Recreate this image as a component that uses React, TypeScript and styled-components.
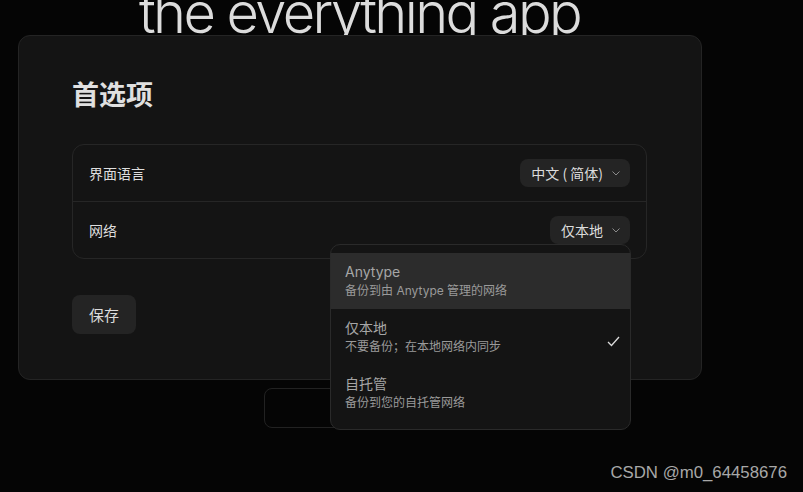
import React from "react";
import styled, { createGlobalStyle } from "styled-components";

const GlobalStyle = createGlobalStyle`
  html, body {
    margin: 0;
    padding: 0;
    background: #050505;
    overflow: hidden;
  }
  body {
    width: 803px;
    height: 492px;
    font-family: Inter, "Noto Sans CJK SC", sans-serif;
  }
`;

const Page = styled.div`
  position: relative;
  width: 803px;
  height: 492px;
  overflow: hidden;
  display: flex;
  flex-direction: column;
`;

const Hero = styled.h1`
  margin: -22px 0 0 0;
  padding-left: 139px;
  height: 57px;
  font-family: Inter, sans-serif;
  font-weight: 300;
  font-size: 56px;
  line-height: 70px;
  letter-spacing: -2.6px;
  color: #dcdcdc;
  white-space: nowrap;
`;

const Card = styled.div`
  position: relative;
  z-index: 1;
  margin-left: 18px;
  width: 684px;
  box-sizing: border-box;
  padding: 40px 54px 45px 53px;
  background: #141414;
  border: 1px solid #242424;
  border-radius: 12px;
  display: flex;
  flex-direction: column;
  align-items: flex-start;
`;

const Title = styled.h2`
  margin: 0 0 32px 0;
  font-family: "Noto Sans CJK SC", sans-serif;
  font-size: 27px;
  line-height: 36px;
  font-weight: 700;
  color: #e0e0e0;
`;

const List = styled.div`
  align-self: stretch;
  border: 1px solid #262626;
  border-radius: 12px;
  display: flex;
  flex-direction: column;
`;

const Row = styled.div<{ $divider?: boolean }>`
  height: 56px;
  display: flex;
  align-items: center;
  justify-content: space-between;
  padding: 0 16px;
  border-bottom: ${(p) => (p.$divider ? "1px solid #262626" : "none")};
`;

const Label = styled.span`
  font-family: "Noto Sans CJK SC", sans-serif;
  font-size: 14px;
  color: #dedede;
`;

const SelectWrap = styled.div`
  position: relative;
`;

const Select = styled.button`
  height: 28px;
  display: flex;
  align-items: center;
  gap: 9px;
  padding: 0 10px 0 11px;
  background: #242424;
  border: none;
  border-radius: 8px;
  font-family: "Noto Sans CJK SC", sans-serif;
  font-size: 14px;
  color: #dcdcdc;
  white-space: pre;
`;

const Menu = styled.div`
  position: absolute;
  top: 28px;
  right: -1px;
  width: 301px;
  box-sizing: border-box;
  padding: 8px 0;
  background: #141414;
  border: 1px solid #2a2a2a;
  border-radius: 10px;
  display: flex;
  flex-direction: column;
  z-index: 5;
`;

const Option = styled.div<{ $active?: boolean }>`
  height: 56px;
  box-sizing: border-box;
  padding: 9px 10px 0 14px;
  background: ${(p) => (p.$active ? "#2c2c2c" : "transparent")};
  display: flex;
  align-items: center;
  justify-content: space-between;
`;

const OptionText = styled.div`
  display: flex;
  flex-direction: column;
  gap: 1px;
  align-self: flex-start;
`;

const OptionTitle = styled.span`
  font-family: Inter, "Noto Sans CJK SC", sans-serif;
  font-size: 14px;
  line-height: 19px;
  color: #a6a6a6;
`;

const OptionSub = styled.span`
  font-family: Inter, "Noto Sans CJK SC", sans-serif;
  font-size: 12px;
  line-height: 17px;
  color: #9a9a9a;
`;

const SaveButton = styled.button`
  margin-top: 36px;
  height: 39px;
  padding: 0 17px;
  background: #242424;
  border: none;
  border-radius: 8px;
  font-family: "Noto Sans CJK SC", sans-serif;
  font-size: 15px;
  color: #dcdcdc;
`;

const GhostButton = styled.div`
  margin: 8px 0 0 264px;
  width: 276px;
  height: 40px;
  box-sizing: border-box;
  border: 1px solid #222;
  border-radius: 8px;
`;

const Watermark = styled.span`
  position: absolute;
  right: 16px;
  bottom: 9px;
  font-family: "Liberation Sans", Arial, sans-serif;
  font-size: 16.8px;
  color: #a8a8a8;
`;

const Chevron = () => (
  <svg width="8" height="5" viewBox="0 0 8 5" fill="none">
    <polyline points="0.5,0.5 4,4 7.5,0.5" stroke="#8a8a8a" strokeWidth="1" />
  </svg>
);

const Check = () => (
  <svg width="13" height="11" viewBox="0 0 13 11" fill="none">
    <polyline points="1,6 4.5,9.5 12,1" stroke="#dcdcdc" strokeWidth="1.3" />
  </svg>
);

const options = [
  { title: "Anytype", sub: "备份到由 Anytype 管理的网络", active: true },
  { title: "仅本地", sub: "不要备份；在本地网络内同步", checked: true },
  { title: "自托管", sub: "备份到您的自托管网络" },
];

export default function App() {
  return (
    <Page>
      <GlobalStyle />
      <Hero>the everything app</Hero>
      <Card>
        <Title>首选项</Title>
        <List>
          <Row $divider>
            <Label>界面语言</Label>
            <Select>
              中文 ( 简体)
              <Chevron />
            </Select>
          </Row>
          <Row>
            <Label>网络</Label>
            <SelectWrap>
              <Select>
                仅本地
                <Chevron />
              </Select>
              <Menu>
                {options.map((o) => (
                  <Option key={o.title} $active={o.active}>
                    <OptionText>
                      <OptionTitle>{o.title}</OptionTitle>
                      <OptionSub>{o.sub}</OptionSub>
                    </OptionText>
                    {o.checked && <Check />}
                  </Option>
                ))}
              </Menu>
            </SelectWrap>
          </Row>
        </List>
        <SaveButton>保存</SaveButton>
      </Card>
      <GhostButton />
      <Watermark>CSDN @m0_64458676</Watermark>
    </Page>
  );
}
